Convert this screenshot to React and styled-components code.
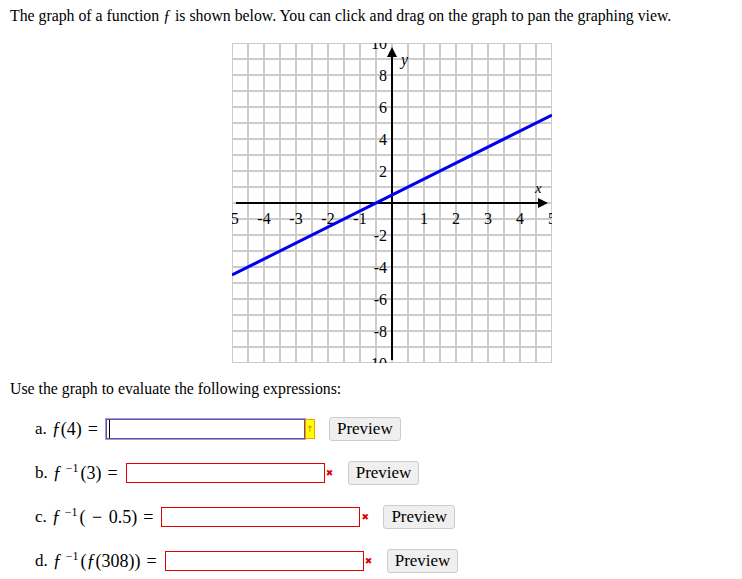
import styled, { createGlobalStyle } from "styled-components";

const SERIF = `"Liberation Serif", Tinos, "Times New Roman", Times, "DejaVu Serif", serif`;

const GlobalStyle = createGlobalStyle`
  body {
    margin: 0;
    background: #ffffff;
    font-family: ${SERIF};
    font-size: 16px;
    color: #000000;
  }
`;

const Page = styled.div`
  padding: 7px 10px 0 10px;
  font-family: ${SERIF};
`;

const Intro = styled.p`
  margin: 0;
  font-size: 15.8px;
  line-height: 18px;
`;

const GraphBox = styled.div`
  margin: 18px 0 17px 222px;
  width: 320px;
  height: 320px;
  svg {
    display: block;
  }
`;

const Questions = styled.div`
  display: flex;
  flex-direction: column;
  gap: 20px;
  margin-top: 19px;
  padding-left: 25px;
`;

const Row = styled.div`
  display: flex;
  align-items: center;
  height: 24px;
`;

const Label = styled.span`
  font-size: 17px;
  margin-right: 5px;
`;

const MathExpr = styled.span`
  font-size: 18px;
  font-style: italic;
  margin-right: 2px;
  white-space: pre;
`;

const Sup = styled.sup`
  font-size: 12px;
  font-style: normal;
  vertical-align: 7px;
  line-height: 0;
  margin: 0 2px 0 4px;
`;

const Op = styled.span`
  font-style: normal;
  margin: 0 ${(p) => p.$space || 4}px;
`;

const Num = styled.span`
  font-style: normal;
`;

const Field = styled.input`
  box-sizing: border-box;
  width: 199px;
  height: 20px;
  margin: 0;
  padding: 0 2px;
  background: #fff;
  border: 1px solid ${(p) => (p.$focus ? "#8e3f8a" : "#e00000")};
  outline: ${(p) => (p.$focus ? "1px solid #80a8f0" : "none")};
  outline-offset: 0;
  box-shadow: ${(p) => (p.$focus ? "inset 2px 0 0 0 #fff, inset 3px 0 0 0 #000" : "none")};
`;

const Hint = styled.span`
  box-sizing: border-box;
  width: 10px;
  height: 20px;
  background: #ffff00;
  border: 1px solid #f0a000;
  color: #d08000;
  font-family: "DejaVu Sans", sans-serif;
  font-size: 9px;
  display: flex;
  align-items: center;
  justify-content: center;
  margin-right: 14px;
`;

const Cross = styled.span`
  width: 9px;
  margin: 0 13px 0 1px;
  color: #e00000;
  font-family: "DejaVu Sans", sans-serif;
  font-size: 9px;
  line-height: 20px;
`;

const PreviewButton = styled.button`
  box-sizing: border-box;
  height: 24px;
  padding: 0 7px;
  font-family: ${SERIF};
  font-size: 17px;
  background: #efefef;
  border: 1px solid #cccccc;
  border-radius: 3px;
  color: #000;
`;

const W = 320;
const H = 320;
const X0 = 160;
const Y0 = 160;
const UX = 32;
const UY = 16;

const px = (x) => X0 + x * UX;
const py = (y) => Y0 - y * UY;
const f = (x) => x + 0.5;

const Graph = () => {
  const lines = [];
  for (let i = 0; i <= 20; i++) lines.push(i * 16);
  const xTicks = [-5, -4, -3, -2, -1, 1, 2, 3, 4, 5];
  const yTicks = [-10, -8, -6, -4, -2, 2, 4, 6, 8, 10];
  return (
    <svg width={W} height={H} viewBox={`0 0 ${W} ${H}`}>
      <rect x="0" y="0" width={W} height={H} fill="#fff" />
      {lines.map((x) => (
        <line key={"v" + x} x1={x} y1={0} x2={x} y2={H} stroke="#cccccc" strokeWidth="2" />
      ))}
      {lines.map((y) => (
        <line key={"h" + y} x1={0} y1={y} x2={W} y2={y} stroke="#cccccc" strokeWidth="2" />
      ))}
      <line x1={4} y1={Y0} x2={307} y2={Y0} stroke="#000" strokeWidth="2" />
      <polygon points={`316,${Y0} 306,${Y0 - 5} 306,${Y0 + 5}`} fill="#000" />
      <line x1={X0} y1={317} x2={X0} y2={13} stroke="#000" strokeWidth="2" />
      <polygon points={`${X0},4 ${X0 - 5},14 ${X0 + 5},14`} fill="#000" />
      <g style={{ fontFamily: SERIF }} fontSize="16" fill="#000">
        {xTicks.map((t) => (
          <text key={"x" + t} x={px(t)} y={Y0 + 21} textAnchor="middle">
            {t}
          </text>
        ))}
        {yTicks.map((t) => (
          <text key={"y" + t} x={155} y={py(t) + 5.5} textAnchor="end">
            {t}
          </text>
        ))}
        <text x={169} y={22} fontStyle="italic">y</text>
        <text x={303} y={150} fontStyle="italic" fontSize="15">x</text>
      </g>
      <line x1={0} y1={py(f(-5))} x2={W} y2={py(f(5))} stroke="#0000ee" strokeWidth="3" />
    </svg>
  );
};

const App = () => {
  const rows = [
    { key: "a", label: "a.", expr: <>ƒ<Num>(4)</Num></>, status: "focus" },
    { key: "b", label: "b.", expr: <>ƒ<Sup>−1</Sup><Num>(3)</Num></>, status: "bad" },
    {
      key: "c",
      label: "c.",
      expr: <>ƒ<Sup>−1</Sup><Num>(<Op $space={6.5}>−</Op>0.5)</Num></>,
      status: "bad",
    },
    { key: "d", label: "d.", expr: <>ƒ<Sup>−1</Sup><Num>(</Num>ƒ<Num>(308))</Num></>, status: "bad" },
  ];
  return (
    <Page>
      <GlobalStyle />
      <Intro>
        The graph of a function <i>ƒ</i> is shown below. You can click and drag on the graph to pan the graphing view.
      </Intro>
      <GraphBox>
        <Graph />
      </GraphBox>
      <Intro>Use the graph to evaluate the following expressions:</Intro>
      <Questions>
        {rows.map((r) => (
          <Row key={r.key}>
            <Label>{r.label}</Label>
            <MathExpr>
              {r.expr}<Op $space={6}>=</Op>
            </MathExpr>
            <Field $focus={r.status === "focus"} />
            {r.status === "focus" ? <Hint>↑</Hint> : <Cross>✖</Cross>}
            <PreviewButton>Preview</PreviewButton>
          </Row>
        ))}
      </Questions>
    </Page>
  );
};

export default App;
